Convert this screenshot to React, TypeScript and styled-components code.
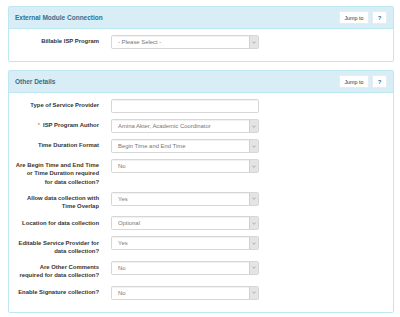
import React from "react";
import styled, { createGlobalStyle } from "styled-components";

const GlobalStyle = createGlobalStyle`
  body {
    margin: 0;
    background: #fff;
    font-family: "Liberation Sans", Arial, sans-serif;
    color: #333;
  }
  * {
    box-sizing: border-box;
  }
`;

type Row = {
  label: string[];
  required?: boolean;
  value?: string;
  kind: "select" | "input";
};

const otherRows: Row[] = [
  { label: ["Type of Service Provider"], kind: "input" },
  {
    label: ["ISP Program Author"],
    required: true,
    value: "Amina Akter, Academic Coordinator",
    kind: "select",
  },
  { label: ["Time Duration Format"], value: "Begin Time and End Time", kind: "select" },
  {
    label: ["Are Begin Time and End Time", "or Time Duration required", "for data collection?"],
    value: "No",
    kind: "select",
  },
  { label: ["Allow data collection with", "Time Overlap"], value: "Yes", kind: "select" },
  { label: ["Location for data collection"], value: "Optional", kind: "select" },
  {
    label: ["Editable Service Provider for", "data collection?"],
    value: "Yes",
    kind: "select",
  },
  {
    label: ["Are Other Comments", "required for data collection?"],
    value: "No",
    kind: "select",
  },
  { label: ["Enable Signature collection?"], value: "No", kind: "select" },
];

const App = () => {
  return (
    <>
      <GlobalStyle />
      <Page>
        <Panel>
          <PanelHeader>
            <PanelTitle>External Module Connection</PanelTitle>
            <HeaderActions>
              <HeaderButton>Jump to</HeaderButton>
              <HelpButton>?</HelpButton>
            </HeaderActions>
          </PanelHeader>
          <PanelBody>
            <FormRow>
              <FieldLabel>Billable ISP Program</FieldLabel>
              <Select value="- Please Select -" />
            </FormRow>
          </PanelBody>
        </Panel>

        <Panel>
          <PanelHeader>
            <PanelTitle>Other Details</PanelTitle>
            <HeaderActions>
              <HeaderButton>Jump to</HeaderButton>
              <HelpButton>?</HelpButton>
            </HeaderActions>
          </PanelHeader>
          <PanelBody>
            {otherRows.map((row) => (
              <FormRow key={row.label.join(" ")}>
                <FieldLabel>
                  {row.required && <Required>*</Required>}
                  {row.label.map((line, i) => (
                    <React.Fragment key={line}>
                      {i > 0 && <br />}
                      {line}
                    </React.Fragment>
                  ))}
                </FieldLabel>
                {row.kind === "input" ? <TextBox /> : <Select value={row.value ?? ""} />}
              </FormRow>
            ))}
          </PanelBody>
        </Panel>
      </Page>
    </>
  );
};

const Select = ({ value }: { value: string }) => {
  return (
    <SelectBox>
      <SelectText>{value}</SelectText>
      <SelectArrow>
        <svg width="4" height="3" viewBox="0 0 4 3">
          <path d="M0.4 0.6 L2 2.3 L3.6 0.6" fill="none" stroke="#888" strokeWidth="0.6" />
        </svg>
      </SelectArrow>
    </SelectBox>
  );
};

const Page = styled.div`
  padding: 6px 6.5px 0 8px;
`;

const Panel = styled.section`
  border: 1px solid #bce8f1;
  border-radius: 2px;
  margin-bottom: 8px;
  background: #fff;
`;

const PanelHeader = styled.div`
  height: 22px;
  display: flex;
  align-items: center;
  justify-content: space-between;
  padding: 0 5.5px 0 6px;
  background: #d9edf7;
  border-bottom: 1px solid #bce8f1;
`;

const PanelTitle = styled.h3`
  margin: 0;
  font-size: 6.5px;
  font-weight: bold;
  color: #31708f;
`;

const HeaderActions = styled.div`
  display: flex;
  gap: 3px;
`;

const HeaderButton = styled.button`
  height: 13px;
  width: 30px;
  padding: 0;
  font-family: inherit;
  font-size: 5.4px;
  color: #333;
  background: #fff;
  border: 1px solid #e3eef3;
  border-radius: 1.5px;
`;

const HelpButton = styled(HeaderButton)`
  width: 15px;
  font-size: 6px;
  font-weight: bold;
  color: #31708f;
`;

const PanelBody = styled.div`
  padding: 6px 0 6px;
`;

const FormRow = styled.div`
  display: flex;
  align-items: flex-start;
  gap: 12px;
  margin-bottom: 6px;
`;

const FieldLabel = styled.label`
  width: 90px;
  flex-shrink: 0;
  padding-top: 2.2px;
  text-align: right;
  white-space: nowrap;
  font-size: 5.9px;
  line-height: 8.2px;
  font-weight: bold;
  color: #333;
`;

const Required = styled.span`
  color: #d9534f;
  font-weight: normal;
  margin-right: 3px;
`;

const TextBox = styled.div`
  width: 148px;
  height: 14px;
  border: 1px solid #d6d6d6;
  border-radius: 1.5px;
  background: #fff;
  box-shadow: inset 0 1px 1px rgba(0, 0, 0, 0.06);
`;

const SelectBox = styled(TextBox)`
  display: flex;
  align-items: stretch;
  overflow: hidden;
`;

const SelectText = styled.span`
  flex: 1;
  display: flex;
  align-items: center;
  padding-left: 6px;
  font-size: 5.9px;
  color: #777;
  white-space: nowrap;
  overflow: hidden;
`;

const SelectArrow = styled.span`
  width: 9px;
  display: flex;
  align-items: center;
  justify-content: center;
  background: #e4e4e4;
  border-left: 1px solid #d0d0d0;
`;

export default App;
